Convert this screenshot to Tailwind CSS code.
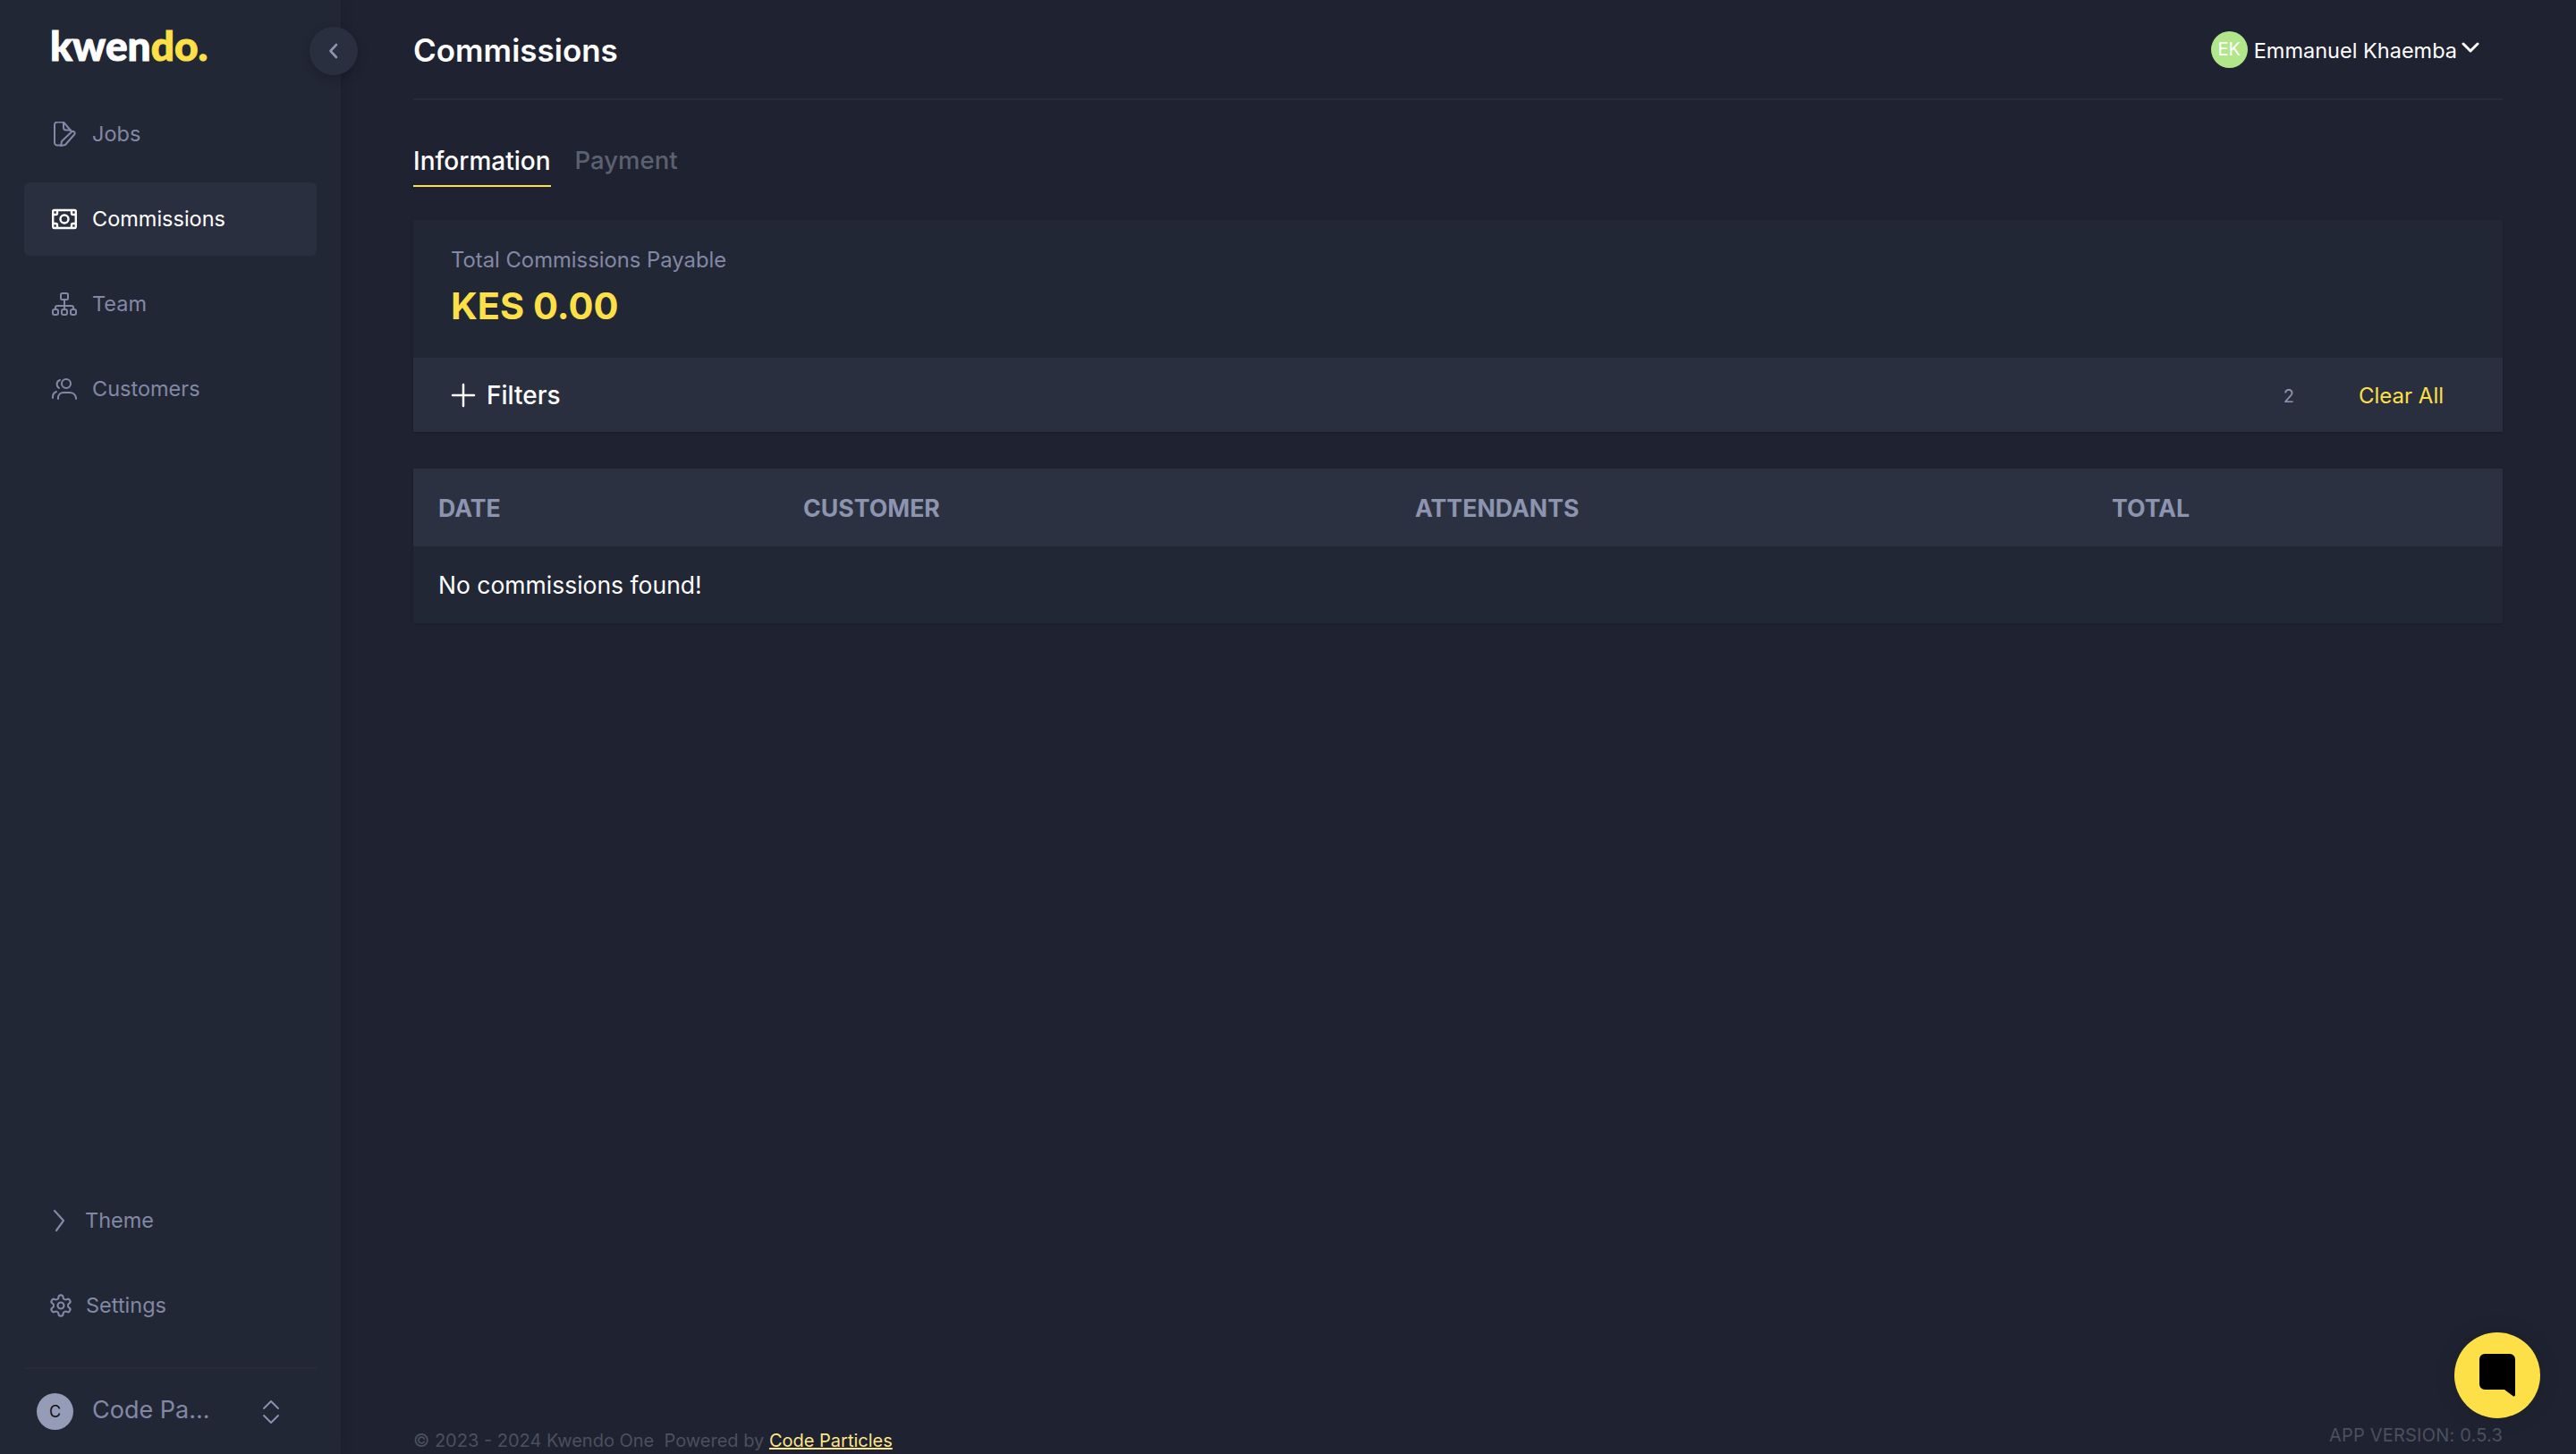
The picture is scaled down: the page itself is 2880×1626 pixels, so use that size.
<!DOCTYPE html>
<html lang="en">
  <head>
    <meta charset="UTF-8" />
    <title>Commissions</title>
    <script src="https://cdn.jsdelivr.net/npm/@tailwindcss/browser@4"></script>
  </head>
  <body class="bg-[#1f2230] font-[Inter,sans-serif] text-white">
    <div class="relative flex h-[1626px] w-[2880px] overflow-hidden">
      <!-- Sidebar -->
      <aside class="relative flex w-[381px] shrink-0 flex-col bg-[#222735] shadow-[2px_0_12px_rgba(0,0,0,0.12)]">
        <div class="h-[109px] pt-[23px] pl-[56px]">
          <span class="font-[Lato,sans-serif] text-[46px] leading-[56px] font-black text-white [-webkit-text-stroke:1px_currentColor]">kwen<span class="text-[#fde047]">do.</span></span>
        </div>
        <button class="absolute top-[30px] left-[346px] flex h-[54px] w-[54px] items-center justify-center rounded-full bg-[#2a2f3f] shadow-[0_4px_12px_rgba(0,0,0,0.2)]">
          <svg class="h-[18px] w-[14px] text-[#8d94b0]" viewBox="0 0 14 18" fill="none" stroke="currentColor" stroke-width="2.6" stroke-linecap="round" stroke-linejoin="round"><path d="M10 2 3.500 9l6.500 7" /></svg>
        </button>

        <nav class="flex flex-col gap-[13px] px-[27px] text-[23.5px] text-[#8288a5]">
          <a class="flex h-[82px] items-center gap-[17px] rounded-[6px] pl-[31px]">
            <svg class="h-[28px] w-[28px]" viewBox="0 0 28 28" fill="none" stroke="currentColor" stroke-width="2" stroke-linecap="round" stroke-linejoin="round"><path d="M9 26.500H6a3 3 0 0 1-3-3v-20a3 3 0 0 1 3-3h7l8.500 10" /><path d="M13 .5v6a3 3 0 0 0 3 3h5" /><path d="m10 27 1-5 11-10.500a2 2 0 0 1 3 0 2 2 0 0 1 0 3L15 26z" /></svg>
            <span>Jobs</span>
          </a>
          <a class="flex h-[82px] items-center gap-[17px] rounded-[6px] bg-[#2a2f3f] pl-[31px] text-white">
            <svg class="h-[28px] w-[28px]" viewBox="0 0 28 28" fill="none" stroke="currentColor" stroke-width="2.4"><rect x="1.200" y="4" width="25.600" height="20" rx="1.500" /><circle cx="14" cy="14" r="4.500" /><path d="M2 9h2.500a1.500 1.500 0 0 0 1.500-1.500V5M22 5v2.500A1.500 1.500 0 0 0 23.500 9H26M2 19h2.500A1.500 1.500 0 0 1 6 20.500V23M22 23v-2.500a1.500 1.500 0 0 1 1.500-1.500H26" /></svg>
            <span>Commissions</span>
          </a>
          <a class="flex h-[82px] items-center gap-[17px] rounded-[6px] pl-[31px]">
            <svg class="h-[28px] w-[28px]" viewBox="0 0 28 28" fill="none" stroke="currentColor" stroke-width="2"><rect x="10" y="2" width="8" height="7" rx="1.500" /><rect x="1" y="20" width="6" height="6" rx="2" /><rect x="11" y="20" width="6" height="6" rx="2" /><rect x="21" y="20" width="6" height="6" rx="2" /><path d="M14 9v11M4 20v-2a2 2 0 0 1 2-2h16a2 2 0 0 1 2 2v2" /></svg>
            <span>Team</span>
          </a>
          <a class="flex h-[82px] items-center gap-[17px] rounded-[6px] pl-[31px]">
            <svg class="h-[28px] w-[28px]" viewBox="0 0 28 28" fill="none" stroke="currentColor" stroke-width="2" stroke-linecap="round"><circle cx="16" cy="8" r="5" /><path d="M7 25v-2a6 6 0 0 1 6-5h6a7 7 0 0 1 8 6v1" /><path d="M9 4a5 5 0 0 0-1 9M1 24v-2a6 6 0 0 1 4-5" /></svg>
            <span>Customers</span>
          </a>
        </nav>

        <div class="mt-auto flex flex-col gap-[13px] px-[27px] text-[23.5px] text-[#8288a5]">
          <a class="flex h-[82px] items-center gap-[20px] pl-[30px]">
            <svg class="h-[26px] w-[18px]" viewBox="0 0 18 26" fill="none" stroke="currentColor" stroke-width="2.2" stroke-linecap="round" stroke-linejoin="round"><path d="m4 2 10 11L6 24" /></svg>
            <span>Theme</span>
          </a>
          <a class="flex h-[82px] items-center gap-[14px] pl-[27px]">
            <svg class="h-[28px] w-[28px]" viewBox="0 0 24 24" fill="none" stroke="currentColor" stroke-width="1.800" stroke-linecap="round" stroke-linejoin="round"><path d="M12.220 2h-.44a2 2 0 0 0-2 2v.18a2 2 0 0 1-1 1.730l-.43.25a2 2 0 0 1-2 0l-.15-.08a2 2 0 0 0-2.730.730l-.22.380a2 2 0 0 0 .730 2.730l.15.1a2 2 0 0 1 1 1.720v.510a2 2 0 0 1-1 1.740l-.15.090a2 2 0 0 0-.730 2.730l.22.380a2 2 0 0 0 2.730.730l.15-.08a2 2 0 0 1 2 0l.43.25a2 2 0 0 1 1 1.730V20a2 2 0 0 0 2 2h.44a2 2 0 0 0 2-2v-.18a2 2 0 0 1 1-1.730l.43-.25a2 2 0 0 1 2 0l.15.08a2 2 0 0 0 2.730-.730l.22-.390a2 2 0 0 0-.730-2.730l-.15-.08a2 2 0 0 1-1-1.740v-.5a2 2 0 0 1 1-1.740l.15-.090a2 2 0 0 0 .730-2.730l-.22-.380a2 2 0 0 0-2.730-.730l-.15.08a2 2 0 0 1-2 0l-.43-.25a2 2 0 0 1-1-1.730V4a2 2 0 0 0-2-2z" /><circle cx="12" cy="12" r="3" /></svg>
            <span>Settings</span>
          </a>
        </div>

        <div class="mx-[27px] mt-[28px] flex h-[97px] items-center border-t-2 border-[#282c3a] pl-[14px]">
          <span class="flex h-[41px] w-[41px] items-center justify-center rounded-full bg-[#959cb8] text-[18px] text-[#111]">C</span>
          <span class="mb-[2px] ml-[21px] w-[150px] text-[27px] whitespace-nowrap text-[#8288a5]">Code Pa...</span>
          <svg class="ml-[40px] h-[28px] w-[20px] text-[#8d94b0]" viewBox="0 0 20 28" fill="none" stroke="currentColor" stroke-width="1.800" stroke-linecap="round" stroke-linejoin="round"><path d="m2 10 8-8 8 8M2 18l8 8 8-8" /></svg>
        </div>
      </aside>

      <!-- Main -->
      <main class="flex min-w-0 flex-1 flex-col pr-[82px] pl-[81px]">
        <header class="flex h-[112px] shrink-0 items-center justify-between border-b-2 border-[#282c3a] pr-[26px]">
          <h1 class="mt-[2px] text-[35px] font-semibold">Commissions</h1>
          <div class="flex items-center">
            <span class="flex h-[41px] w-[41px] items-center justify-center rounded-full bg-[#b2e68a] text-[20px]">EK</span>
            <span class="mt-[3px] ml-[7px] text-[23.5px]">Emmanuel Khaemba</span>
            <svg class="mb-[4px] ml-[5px] h-[14px] w-[20px]" viewBox="0 0 20 14" fill="none" stroke="currentColor" stroke-width="3" stroke-linecap="round" stroke-linejoin="round"><path d="m2 3 8 8 8-8" /></svg>
          </div>
        </header>

        <div class="mt-[47px] flex h-[50px] shrink-0 gap-[27px] text-[28px] font-medium">
          <span class="border-b-2 border-[#fde047] text-white">Information</span>
          <span class="text-[27.5px] text-[#5c6170]">Payment</span>
        </div>

        <section class="mt-[37px] shrink-0 shadow-sm">
          <div class="h-[154px] bg-[#222735] pt-[28px] pl-[42px]">
            <div class="text-[23.8px] leading-[34px] text-[#8288a5]">Total Commissions Payable</div>
            <div class="mt-[7px] text-[41.5px] leading-[54px] font-bold text-[#fde047]">KES 0.00</div>
          </div>
          <div class="flex h-[83px] items-center bg-[#2a2f3f] pr-[66px] pl-[41px]">
            <svg class="h-[30px] w-[30px]" viewBox="0 0 30 30" fill="none" stroke="currentColor" stroke-width="2.500" stroke-linecap="round"><path d="M15 3v24M3 15h24" /></svg>
            <span class="ml-[11px] text-[28px] font-medium">Filters</span>
            <span class="mt-[2px] ml-auto text-[20px] text-[#8d94b0]">2</span>
            <span class="mt-[2px] ml-[72px] text-[24px] text-[#fde047]">Clear All</span>
          </div>
        </section>

        <section class="mt-[41px] shrink-0 shadow-sm">
          <div class="grid h-[87px] grid-cols-[408px_684px_779px_465px] items-center bg-[#2b3140] pt-[2px] text-[26.7px] font-bold text-[#8d94b0]">
            <span class="pl-[28px]">DATE</span>
            <span class="pl-[28px]">CUSTOMER</span>
            <span class="pl-[28px]">ATTENDANTS</span>
            <span class="pl-[28px]">TOTAL</span>
          </div>
          <div class="flex h-[86px] items-center bg-[#222735] pt-[2px] pl-[28px] text-[26.5px]">No commissions found!</div>
        </section>

        <footer class="mt-auto flex h-[30px] shrink-0 items-start justify-between text-[20px] text-[#4c505e]">
          <div>© 2023 - 2024 Kwendo One&nbsp; Powered by <a class="text-[#fde68a] underline">Code Particles</a></div>
          <div class="-mt-[6px] tracking-[0.2px]">APP VERSION: 0.5.3</div>
        </footer>
      </main>

      <!-- Chat launcher -->
      <button class="absolute top-[1490px] left-[2744px] flex h-[96px] w-[96px] items-center justify-center rounded-full bg-[#fde047] shadow-[0_0_24px_rgba(0,0,0,0.12)]">
        <svg class="h-[48px] w-[40px]" viewBox="0 0 40 48" fill="#000"><path d="M6 0h28a6 6 0 0 1 6 6v40a1.500 1.500 0 0 1-2.300 1.300L28 40H6a6 6 0 0 1-6-6V6a6 6 0 0 1 6-6z" /></svg>
      </button>
    </div>
  </body>
</html>
